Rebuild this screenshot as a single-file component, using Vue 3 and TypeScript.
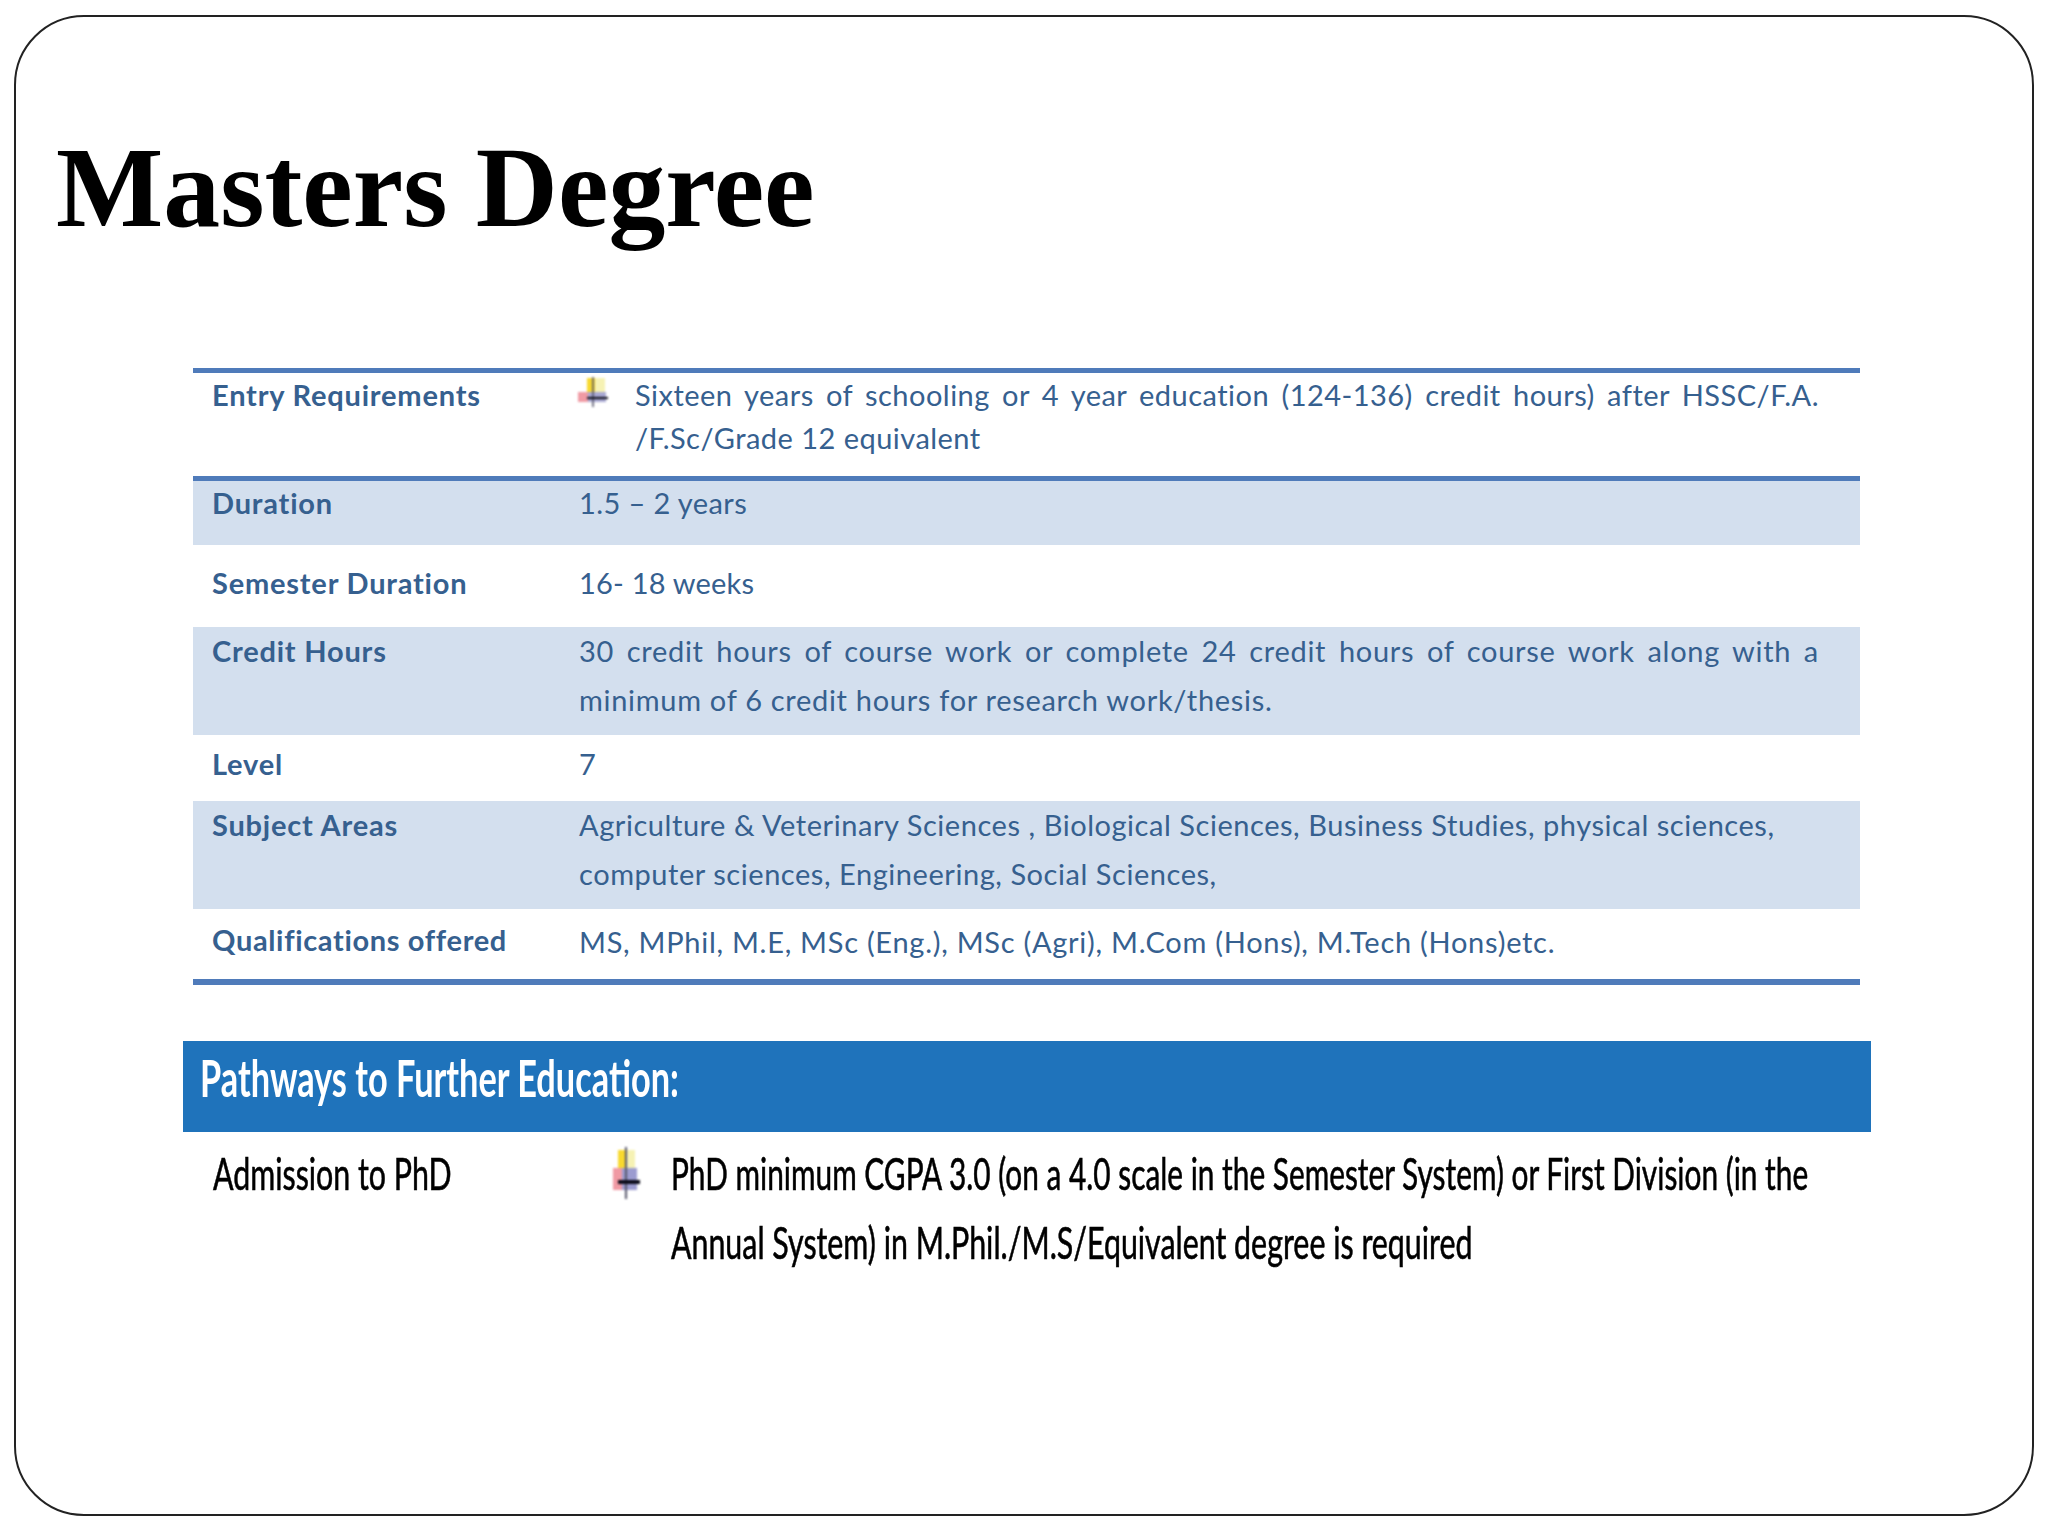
<script setup lang="ts">
interface Row { label: string; lines: string[]; shaded?: boolean; cls: string; bullet?: boolean; justify?: boolean }
const rows: Row[] = [
  { label: 'Entry Requirements', lines: ['Sixteen years of schooling or 4 year education (124-136) credit hours) after HSSC/F.A.', '/F.Sc/Grade 12 equivalent'], cls: 'r1', bullet: true, justify: true },
  { label: 'Duration', lines: ['1.5 – 2 years'], shaded: true, cls: 'r2' },
  { label: 'Semester Duration', lines: ['16- 18 weeks'], cls: 'r3' },
  { label: 'Credit Hours', lines: ['30 credit hours of course work or complete 24 credit hours of course work along with a', 'minimum of 6 credit hours for research work/thesis.'], shaded: true, cls: 'r4', justify: true },
  { label: 'Level', lines: ['7'], cls: 'r5' },
  { label: 'Subject Areas', lines: ['Agriculture & Veterinary Sciences , Biological Sciences, Business Studies, physical sciences,', 'computer sciences, Engineering, Social Sciences,'], shaded: true, cls: 'r6' },
  { label: 'Qualifications offered', lines: ['MS, MPhil, M.E, MSc (Eng.), MSc (Agri), M.Com (Hons), M.Tech (Hons)etc.'], cls: 'r7' },
]
</script>

<template>
  <div class="slide">
    <div class="frame">
      <h1 class="title">Masters Degree</h1>
      <div class="table">
        <div v-for="r in rows" :key="r.label" class="row" :class="[r.cls, { shaded: r.shaded }]">
          <div class="label">{{ r.label }}</div>
          <div class="value" :class="{ 'with-bullet': r.bullet }">
            <svg v-if="r.bullet" class="bullet" viewBox="0 0 30 30" aria-hidden="true">
              <rect x="9" y="1" width="8" height="14" fill="#f8d92e" />
              <rect x="17" y="1" width="10" height="14" fill="#f6f2b4" />
              <rect x="0" y="15" width="10" height="10" fill="#f09aa4" />
              <rect x="10" y="15" width="18" height="10" fill="#a8a8d2" />
              <rect x="14.2" y="0" width="1.6" height="30" fill="#55556a" />
              <rect x="9" y="20" width="21" height="2" fill="#0c0c16" />
            </svg>
            <div class="lines">
              <div v-for="l in r.lines" :key="l" class="line" :class="{ just: r.justify && l !== r.lines[r.lines.length - 1] }">{{ l }}</div>
            </div>
          </div>
        </div>
      </div>
      <div class="path-bar"><span class="squeeze">Pathways to Further Education:</span></div>
      <div class="phd">
        <div class="phd-label"><span class="squeeze">Admission to PhD</span></div>
        <svg class="phd-bullet" viewBox="0 0 28 52" aria-hidden="true">
          <rect x="5" y="3" width="9" height="18" fill="#f8d92e" />
          <rect x="14" y="3" width="8" height="18" fill="#f6f2b4" />
          <rect x="0" y="21" width="9" height="22" fill="#f09aa4" />
          <rect x="9" y="21" width="15" height="22" fill="#9c9cd0" />
          <rect x="12" y="0" width="2" height="52" fill="#55556a" />
          <rect x="5" y="33" width="22" height="4" fill="#0a0a18" />
        </svg>
        <div class="phd-text">
          <span class="squeeze first">PhD minimum CGPA 3.0 (on a 4.0 scale in the Semester System) or First Division (in the</span>
          <span class="squeeze">Annual System) in M.Phil./M.S/Equivalent degree is required</span>
        </div>
      </div>
    </div>
  </div>
</template>

<style scoped>
.slide {
  width: 2048px;
  height: 1536px;
  padding: 15px 14px 20px 14px;
  box-sizing: border-box;
  background: #fff;
  overflow: hidden;
}
.frame {
  width: 2020px;
  height: 1501px;
  box-sizing: border-box;
  border: 2px solid #222;
  border-radius: 70px;
  padding-left: 40px;
  padding-top: 106px;
}
.title {
  margin: 0;
  font-family: "Liberation Serif", serif;
  font-weight: 700;
  font-size: 113.7px;
  line-height: 130px;
  color: #000;
}
.table {
  margin-top: 115px;
  margin-left: 137px;
  width: 1667px;
  border-top: 5px solid #4f7bba;
  border-bottom: 6px solid #4f7bba;
  font-family: Lato, sans-serif;
  color: #36608f;
  font-size: 29px;
  letter-spacing: 0.62px;
}
.row {
  display: grid;
  grid-template-columns: 367px 1240px;
  padding-left: 19px;
  box-sizing: border-box;
}
.shaded { background: #d3dfee; }
.label { font-weight: 700; letter-spacing: 0.8px; }
.r1 { height: 108px; border-bottom: 5px solid #4f7bba; line-height: 43px; letter-spacing: 0.47px; }
.r2 { height: 64px; line-height: 44px; letter-spacing: 0.4px; }
.r3 { height: 82px; line-height: 46px; padding-top: 15px; letter-spacing: 0.2px; }
.r4 { height: 108px; line-height: 49px; letter-spacing: 0.7px; }
.r4 > div, .r6 > div { margin-top: -1px; }
.r5 { height: 66px; line-height: 46px; padding-top: 6px; }
.r6 { height: 108px; line-height: 49px; letter-spacing: 0.55px; }
.r7 { height: 70px; line-height: 46px; padding-top: 10px; letter-spacing: 0.73px; }
.r7 .label { margin-top: -2px; letter-spacing: 0.65px; }
.value.with-bullet { display: flex; gap: 27px; }
.bullet { width: 30px; height: 30px; margin: 4px 0 0 -1px; flex: none; filter: blur(0.9px); }
.lines { flex: 1; }
.line { white-space: nowrap; }
.line.just { white-space: normal; text-align: justify; text-align-last: justify; }
.squeeze {
  display: block;
  white-space: nowrap;
  transform-origin: left center;
}
.path-bar {
  margin-top: 56px;
  margin-left: 127px;
  width: 1688px;
  height: 91px;
  box-sizing: border-box;
  padding: 8px 0 0 17px;
  background: #1f73bb;
  color: #fff;
  font-family: Lato, sans-serif;
  font-weight: 700;
  font-size: 52px;
  line-height: 56px;
}
.path-bar .squeeze { transform: scaleX(0.66); }
.phd {
  display: flex;
  margin-left: 157px;
  padding-top: 7px;
  font-family: Lato, sans-serif;
  font-size: 44px;
  line-height: 69px;
  color: #000;
  -webkit-text-stroke: 0.6px #000;
}
.phd .squeeze { transform: scaleX(0.69); }
.phd .squeeze.first { transform: scaleX(0.678); }
.phd-label { width: 400px; flex: none; }
.phd-bullet { width: 28px; height: 52px; margin-top: 8px; flex: none; filter: blur(1px); }
.phd-text { margin-left: 30px; }
</style>
